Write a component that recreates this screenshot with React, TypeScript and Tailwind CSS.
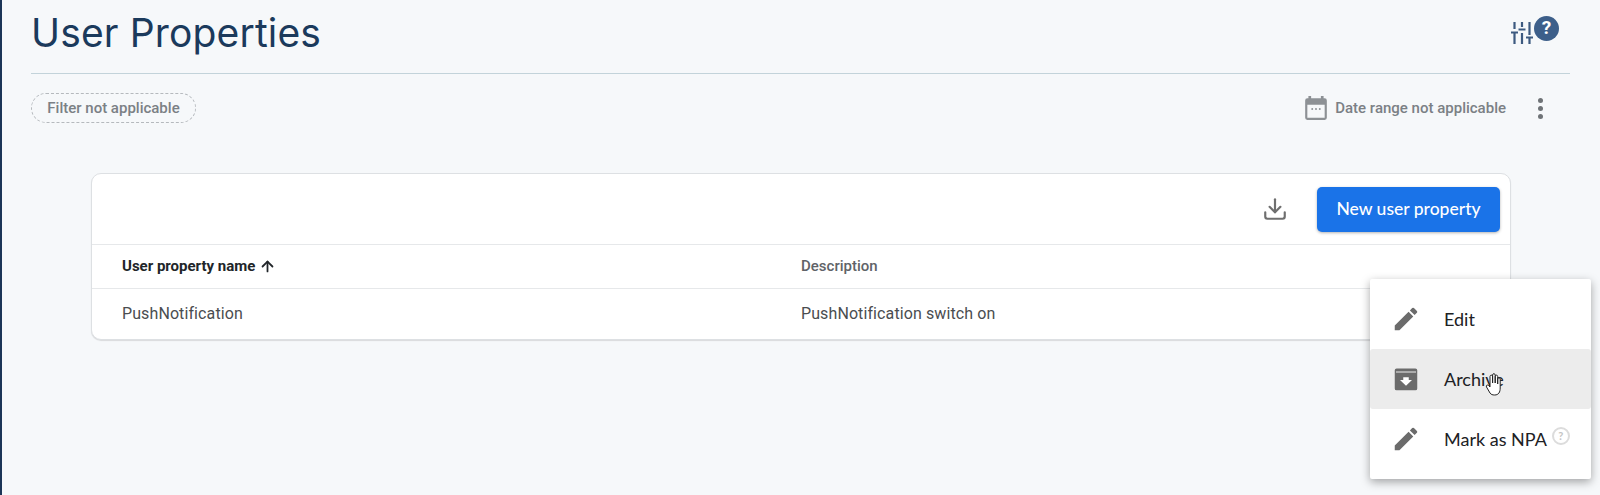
import { Download, ArrowUp } from 'lucide-react';

function Pencil() {
  return (
    <svg viewBox="0 0 24 24" className="h-[30px] w-[30px] fill-[#6b6b6b]">
      <path d="M3 17.25V21h3.75L17.81 9.94l-3.75-3.75L3 17.25zM20.71 7.04a1 1 0 0 0 0-1.41l-2.34-2.34a1 1 0 0 0-1.41 0l-1.83 1.83 3.75 3.75 1.83-1.83z" />
    </svg>
  );
}

function ArchiveBox() {
  return (
    <svg viewBox="0 0 24 24" className="h-[30px] w-[30px] fill-[#6b6b6b]">
      <path d="M4.5 3.5h15A1.5 1.5 0 0 1 21 5v14.5a1.5 1.5 0 0 1-1.5 1.5h-15A1.5 1.5 0 0 1 3 19.500V5a1.500 1.500 0 0 1 1.500-1.500z" />
      <path d="M4 6.400h16" stroke="#fff" strokeWidth="0.7" />
      <path d="M9.800 10.500h4.400v2.300h2.600L12 17.400l-4.800-4.600h2.600z" fill="#fff" />
    </svg>
  );
}

function Tune() {
  return (
    <svg viewBox="0 0 24 24" className="mt-[5px] h-[24px] w-[24px] fill-none stroke-[#3d5a80] stroke-[2.2]">
      <path d="M4.500 1v7M1 11.500h7M4.500 11.500V23M12 1v5M8.500 8.500h7M12 12v11M19.500 1v13M16 16.500h7M19.500 16.500V23" />
    </svg>
  );
}

function HandCursor() {
  return (
    <svg viewBox="0 0 20 26" className="absolute left-[1483px] top-[372px] h-[26px] w-[20px]">
      <path
        d="M5 21l-3.500-6c-.8-1.500.8-2.600 2-1.500L5 15V4.500c0-1.800 2.600-1.800 2.600 0V11V3c0-1.800 2.600-1.800 2.600 0v8V4.500c0-1.800 2.500-1.800 2.500 0V12V7c0-1.700 2.500-1.700 2.500 0v9c0 4-1.500 7-5.500 7-2.500 0-3.500-.5-4.700-2z"
        fill="#fff"
        stroke="#222"
        strokeWidth="1"
        strokeLinejoin="round"
      />
    </svg>
  );
}

export default function App() {
  return (
    <div className="relative h-[495px] overflow-hidden border-l-2 border-[#1c3557] bg-[#f6f8fa] font-['Roboto',sans-serif]">
      <div className="ml-[29px] mr-[30px]">
        <div className="flex h-[74px] items-center justify-between border-b border-[#c3d3da] pb-[8px]">
          <h1 className="font-['Inter',sans-serif] text-[39px] leading-[48px] tracking-[0.15px] text-[#1b3a5c]">User Properties</h1>
          <div className="mb-[4px] mr-[11px] flex items-start">
            <Tune />
            <div className="flex h-[25px] w-[25px] items-center justify-center rounded-full bg-[#3d5f8a] text-[19px] font-bold text-white">?</div>
          </div>
        </div>

        <div className="flex items-center justify-between pt-[19px]">
          <div className="flex h-[30px] w-[165px] items-center justify-center rounded-full border border-dashed border-[#b5b9bd] text-[15px] font-medium text-[#7b8085]">
            Filter not applicable
          </div>
          <div className="flex items-center">
            <svg viewBox="0 0 24 24" className="h-[26px] w-[26px] fill-[#8d9195]">
              <path d="M5 1h2.500v2h9V1H19v2h1a2 2 0 0 1 2 2v16a2 2 0 0 1-2 2H4a2 2 0 0 1-2-2V5a2 2 0 0 1 2-2h1V1zM4 9v12h16V9H4z" />
              <circle cx="8.500" cy="13" r="0.900" />
              <circle cx="12" cy="13" r="0.900" />
              <circle cx="15.500" cy="13" r="0.900" />
            </svg>
            <span className="ml-[6px] text-[15px] font-medium text-[#7b8085]">Date range not applicable</span>
            <div className="ml-[32px] mr-[27px] flex flex-col gap-[3px]">
              <span className="h-[5px] w-[5px] rounded-full bg-[#6f7377]" />
              <span className="h-[5px] w-[5px] rounded-full bg-[#6f7377]" />
              <span className="h-[5px] w-[5px] rounded-full bg-[#6f7377]" />
            </div>
          </div>
        </div>
      </div>

      <div className="ml-[89px] mr-[89px] mt-[50px] h-[167px] rounded-[10px] border border-[#dde0e3] bg-white shadow-[0_1px_1px_rgba(0,0,0,0.12)]">
        <div className="flex h-[71px] items-center justify-end border-b border-[#e6e8ea] pr-[10px]">
          <Download className="mr-[29px] h-[26px] w-[26px] text-[#6f6f6f]" strokeWidth={2} />
          <button className="flex h-[45px] w-[183px] items-center justify-center rounded-[5px] bg-[#1a73e8] font-['Lato',sans-serif] text-[17.5px] font-medium text-white shadow-[0_1px_3px_rgba(0,0,0,0.3)]">
            New user property
          </button>
        </div>
        <div className="flex h-[44px] items-center border-b border-[#e6e8ea] text-[15px] font-bold">
          <div className="flex w-[709px] items-center pl-[30px] text-[#212529]">
            User property name
            <ArrowUp className="ml-[4px] h-[17px] w-[17px] text-[#212529]" strokeWidth={2.5} />
          </div>
          <div className="font-medium text-[#5f6368]">Description</div>
        </div>
        <div className="flex h-[50px] items-center text-[16px] tracking-[0.1px] text-[#4a4d50]">
          <div className="w-[709px] pl-[30px]">PushNotification</div>
          <div>PushNotification switch on</div>
        </div>
      </div>

      <div className="absolute left-[1368px] top-[279px] flex h-[200px] w-[221px] flex-col justify-center rounded-[2px] bg-white font-['Lato',sans-serif] text-[18px] text-[#202124] shadow-[0_3px_10px_rgba(0,0,0,0.35)]">
        <div className="flex h-[60px] items-center pl-[21px]">
          <Pencil />
          <span className="ml-[23px]">Edit</span>
        </div>
        <div className="flex h-[60px] items-center rounded-[3px] bg-[#ececec] pl-[21px]">
          <ArchiveBox />
          <span className="ml-[23px]">Archive</span>
        </div>
        <div className="flex h-[60px] items-center pl-[21px]">
          <Pencil />
          <span className="ml-[23px]">Mark as NPA</span>
          <span className="mb-[6px] ml-[5px] flex h-[18px] w-[18px] items-center justify-center rounded-full border-2 border-[#dcdcdc] text-[11px] font-bold text-[#c4c4c4]">?</span>
        </div>
      </div>
      <HandCursor />
    </div>
  );
}
